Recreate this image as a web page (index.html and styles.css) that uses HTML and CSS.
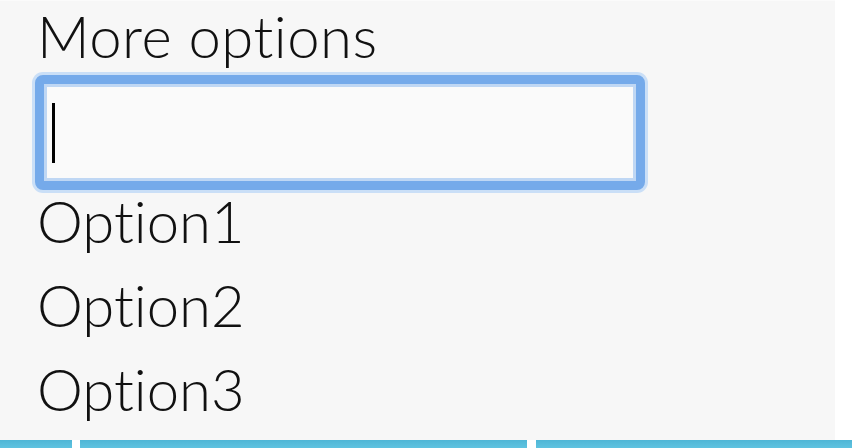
FILE: index.html
```html
<!DOCTYPE html>
<html lang="en">
<head>
<meta charset="utf-8">
<title>More options</title>
<link rel="stylesheet" href="styles.css">
</head>
<body>
<div class="panel">
  <div class="title">More options</div>
  <div class="field"><span class="caret"></span></div>
  <div class="options">
    <div class="option">Option1</div>
    <div class="option">Option2</div>
    <div class="option">Option3</div>
  </div>
</div>
<div class="bar">
  <div class="seg seg-a"></div>
  <div class="seg seg-b"></div>
  <div class="seg seg-c"></div>
</div>
</body>
</html>
```
FILE: styles.css
```css
html, body {
  margin: 0;
  padding: 0;
  background: #ffffff;
}
body {
  width: 852px;
  height: 448px;
  overflow: hidden;
  font-family: Lato, "Open Sans", sans-serif;
  font-weight: 300;
  font-variant-ligatures: none;
  color: #111111;
}
.panel {
  margin: 0 17px 0 0;
  height: 440px;
  box-sizing: border-box;
  background: #f7f7f7;
  border-top: 1px solid #fbfbfb;
  padding: 0 0 0 35px;
}
.title {
  font-size: 58px;
  line-height: 70px;
  padding-left: 2px;
  letter-spacing: 0.5px;
  white-space: nowrap;
}
.field {
  margin-top: 4px;
  width: 610px;
  height: 115px;
  box-sizing: border-box;
  border: 9px solid #75aaea;
  border-radius: 8px;
  box-shadow: 0 0 0 3px #cadff7, inset 0 0 0 3px #bfd7f4;
  background: #fafafa;
}
.caret {
  display: block;
  width: 3px;
  height: 60px;
  margin: 19px 0 0 8px;
  background: #000000;
}
.options {
  display: flex;
  flex-direction: column;
  gap: 14px;
}
.option {
  font-size: 58px;
  line-height: 70px;
  padding-left: 2px;
  white-space: nowrap;
}
.option:first-child {
  margin-top: -4px;
}
.bar {
  display: flex;
  gap: 8px;
  height: 8px;
}
.seg {
  height: 8px;
  background: linear-gradient(#4fb6d6, #5fc3e0);
}
.seg-a { width: 72px; }
.seg-b { width: 447px; margin-right: 1px; }
.seg-c { flex: 1; }
```
